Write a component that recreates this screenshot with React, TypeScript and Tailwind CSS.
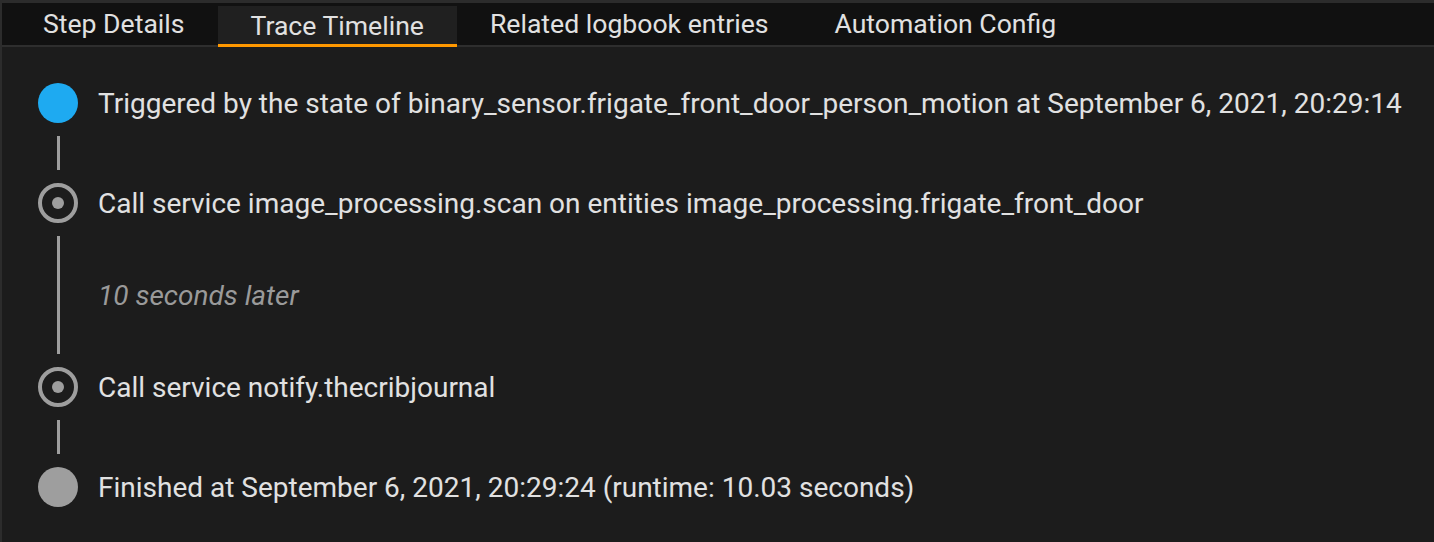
import React from "react"

const tabs = ["Step Details", "Trace Timeline", "Related logbook entries", "Automation Config"]

function Dot({ kind }: { kind: "trigger" | "service" | "end" }) {
  if (kind === "trigger") {
    return <div className="h-10 w-10 rounded-full bg-[#1eaaf1]" />
  }
  if (kind === "end") {
    return <div className="h-10 w-10 rounded-full bg-[#9e9e9e]" />
  }
  return (
    <div className="flex h-10 w-10 items-center justify-center rounded-full border-4 border-[#9e9e9e]">
      <div className="h-3 w-3 rounded-full bg-[#9e9e9e]" />
    </div>
  )
}

function Entry({ kind, children }: { kind: "trigger" | "service" | "end"; children: React.ReactNode }) {
  return (
    <div className="flex h-10 items-center gap-5">
      <Dot kind={kind} />
      <span className="whitespace-nowrap pt-[2px] leading-none">{children}</span>
    </div>
  )
}

function Connector({ long, label }: { long?: boolean; label?: string }) {
  return (
    <div className="flex items-center gap-5 py-[13px]">
      <div className="flex w-10 justify-center">
        <div className={long ? "h-[118px] w-[3px] bg-[#9e9e9e]" : "h-[34px] w-[3px] bg-[#9e9e9e]"} />
      </div>
      {label && <span className="pt-[2px] italic leading-none text-[#9a9a9a]">{label}</span>}
    </div>
  )
}

export default function App() {
  return (
    <div
      className="h-[542px] w-[1434px] overflow-hidden border-l-2 border-t-[3px] border-[#2c2c2c] bg-[#1c1c1c] text-[28px] text-[#e1e1e1]"
      style={{ fontFamily: "Roboto, 'Noto Sans', sans-serif" }}
    >
      <div className="flex h-11 items-end border-b-2 border-[#2e2e2e] bg-[#111111] pl-2 text-[26.6px]">
        {tabs.map((t) => {
          const active = t === "Trace Timeline"
          return (
            <div
              key={t}
              className={
                active
                  ? "relative -mb-[2px] flex h-[41px] items-center bg-[#202020] px-[33px] leading-none"
                  : "flex h-[41px] items-center px-[33px] leading-none"
              }
            >
              {t}
              {active && <div className="absolute bottom-0 left-0 right-0 h-[3px] bg-[#ff9800]" />}
            </div>
          )
        })}
      </div>
      <div className="flex flex-col pl-9 pt-9">
        <Entry kind="trigger">
          Triggered by the state of binary_sensor.frigate_front_door_person_motion at September 6, 2021, 20:29:14
        </Entry>
        <Connector />
        <Entry kind="service">Call service image_processing.scan on entities image_processing.frigate_front_door</Entry>
        <Connector long label="10 seconds later" />
        <Entry kind="service">Call service notify.thecribjournal</Entry>
        <Connector />
        <Entry kind="end">Finished at September 6, 2021, 20:29:24 (runtime: 10.03 seconds)</Entry>
      </div>
    </div>
  )
}
